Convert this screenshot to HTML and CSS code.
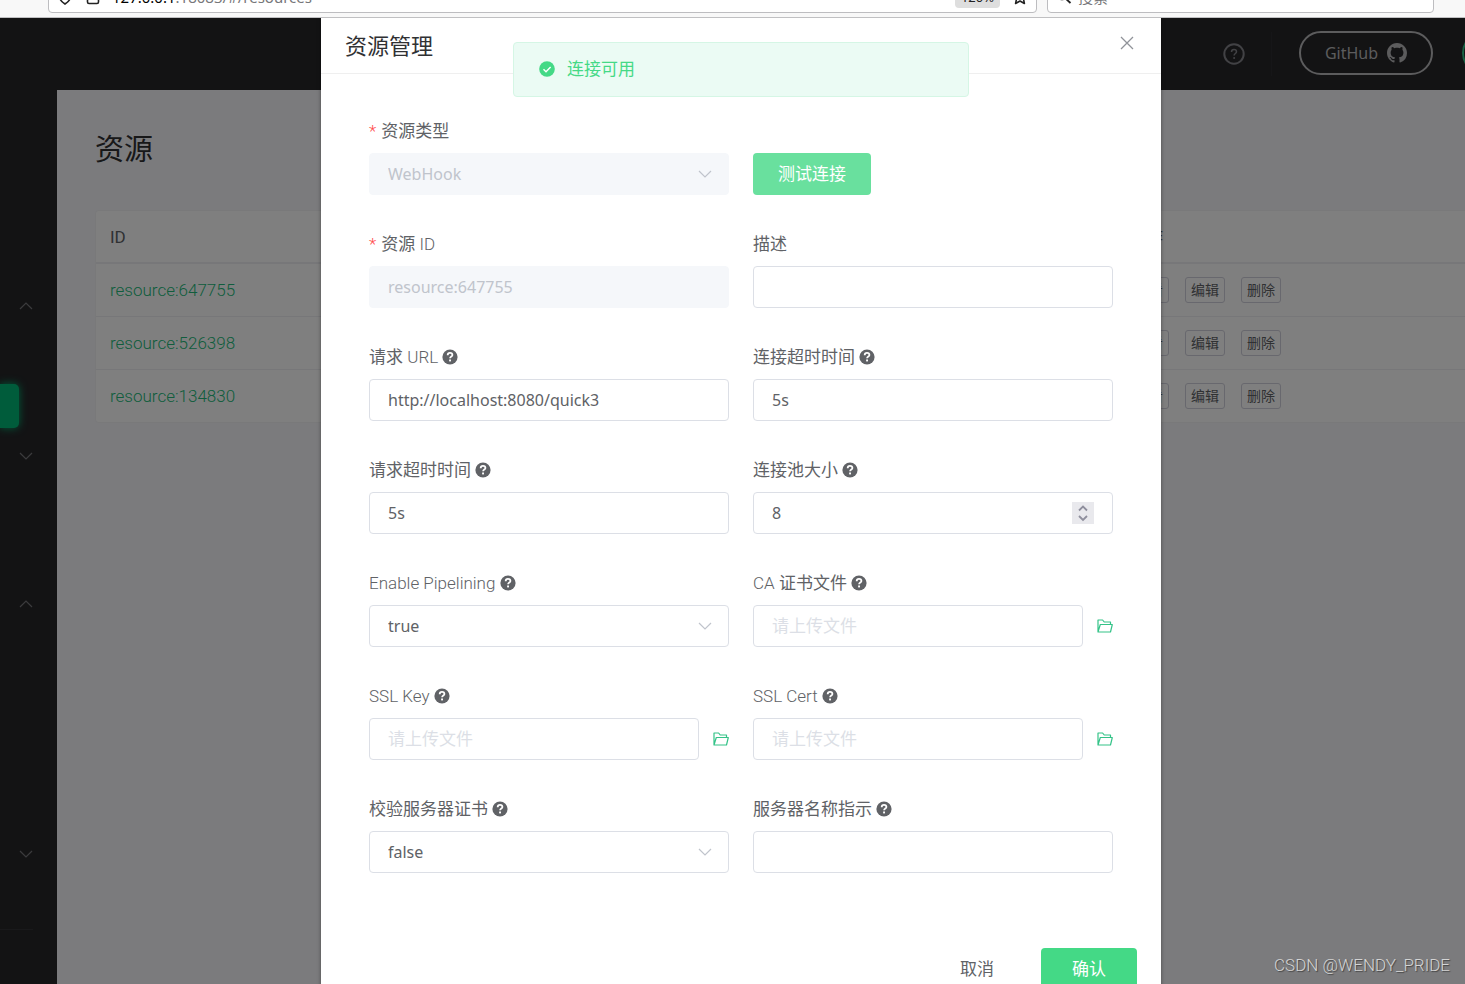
FILE: index.html
```html
<!DOCTYPE html>
<html lang="zh-CN">
<head>
<meta charset="utf-8">
<title>资源管理</title>
<link rel="stylesheet" href="styles.css">
</head>
<body>
<svg class="defs" aria-hidden="true">
  <symbol id="down" viewBox="0 0 16 10"><path d="M2 2l6 6 6-6" fill="none" stroke="currentColor" stroke-width="1.2"/></symbol>
  <symbol id="up" viewBox="0 0 16 10"><path d="M2 8l6-6 6 6" fill="none" stroke="currentColor" stroke-width="1.2"/></symbol>
  <symbol id="help" viewBox="0 0 16 16"><circle cx="8" cy="8" r="7.6" fill="currentColor"/><path d="M5.7 6.2C5.7 4.7 6.6 3.9 8 3.9s2.4.8 2.4 2c0 1.700-2.300 1.500-2.300 3.300" fill="none" stroke="#fff" stroke-width="1.800"/><rect x="7.100" y="10.500" width="1.900" height="1.900" fill="#fff"/></symbol>
  <symbol id="folder" viewBox="0 0 16 14"><path d="M1 13V1h4.600l1.600 2h6.300v2.500M1 13l2.300-7.500H15.300L13.500 13z" fill="none" stroke="currentColor" stroke-width="1.200" stroke-linejoin="round"/></symbol>
</svg>

<div class="browser">
  <div class="address">
    <svg class="shield" viewBox="0 0 16 16"><path d="M8 1l6 2c0 6-1 9-6 12C3 12 2 9 2 3z" fill="none" stroke="currentColor" stroke-width="1.600"/></svg>
    <svg class="lock" viewBox="0 0 16 16"><path d="M5 7V4a3 3 0 0 1 6 0v3" fill="none" stroke="currentColor" stroke-width="1.600"/><rect x="2.500" y="7" width="11" height="7.500" rx="1.500" fill="none" stroke="currentColor" stroke-width="1.600"/></svg>
    <span class="url"><b>127.0.0.1</b>:18083/#/resources</span>
    <span class="zoom-level">120%</span>
    <svg class="star" viewBox="0 0 16 16"><path d="M8 1l2 4.500 5 .5-3.600 3.500 1 5L8 12l-4.400 2.500 1-5L1 6l5-.5z" fill="none" stroke="currentColor" stroke-width="1.600" stroke-linejoin="round"/></svg>
  </div>
  <div class="search">
    <svg viewBox="0 0 16 16"><circle cx="6" cy="6" r="4.500" fill="none" stroke="currentColor" stroke-width="1.600"/><path d="M9 9l5.500 5" stroke="currentColor" stroke-width="1.800"/></svg>
    <input type="text" placeholder="搜索" aria-label="搜索">
  </div>
</div>

<div class="app">
  <nav class="sidebar">
    <ul>
      <li><svg><use href="#up"/></svg></li>
      <li></li>
      <li class="active"></li>
      <li><svg><use href="#down"/></svg></li>
      <li class="leaf"></li>
      <li class="leaf"></li>
      <li><svg><use href="#up"/></svg></li>
      <li></li><li></li><li></li><li></li>
      <li><svg><use href="#down"/></svg></li>
    </ul>
    <hr>
  </nav>
  <div class="content">
    <header class="topbar">
      <button class="top-help" aria-label="帮助"><svg viewBox="0 0 22 22"><circle cx="11" cy="11" r="9.700" fill="none" stroke="currentColor" stroke-width="2"/><path d="M8.500 9c0-1.700 1-2.500 2.500-2.500s2.500 1 2.500 2.200c0 1.800-2.400 1.800-2.400 3.800" fill="none" stroke="currentColor" stroke-width="1.500"/><circle cx="11.100" cy="15" r="1" fill="currentColor"/></svg></button>
      <span class="divider"></span>
      <a class="github" href="#github">GitHub <svg viewBox="0 0 16 16"><path fill="currentColor" d="M8 0C3.580 0 0 3.580 0 8c0 3.540 2.290 6.530 5.470 7.590.4.070.55-.17.55-.38 0-.19-.01-.82-.01-1.490-2.010.37-2.530-.49-2.690-.94-.09-.23-.48-.94-.82-1.130-.28-.15-.68-.52-.01-.53.63-.01 1.080.58 1.230.82.72 1.210 1.870.87 2.330.66.07-.52.28-.87.51-1.070-1.780-.2-3.640-.89-3.640-3.950 0-.87.31-1.590.82-2.150-.08-.2-.36-1.020.08-2.120 0 0 .67-.21 2.200.82.64-.18 1.320-.27 2-.27s1.360.09 2 .27c1.530-1.040 2.200-.82 2.200-.82.44 1.100.16 1.920.08 2.120.51.56.82 1.270.82 2.150 0 3.070-1.870 3.750-3.650 3.950.29.25.54.73.54 1.480 0 1.070-.01 1.930-.01 2.200 0 .21.15.46.55.38A8.010 8.010 0 0 0 16 8c0-4.420-3.580-8-8-8z"/></svg></a>
      <a class="trial" href="#trial" aria-label="试用"></a>
    </header>
    <main>
      <h1>资源</h1>
      <table>
        <colgroup><col class="col-id"><col><col class="col-actions"></colgroup>
        <thead><tr><th>ID</th><th></th><th>操作</th></tr></thead>
        <tbody>
          <tr><td><a href="#r1">resource:647755</a></td><td></td><td><div class="actions"><button>查看</button><button>编辑</button><button>删除</button></div></td></tr>
          <tr><td><a href="#r2">resource:526398</a></td><td></td><td><div class="actions"><button>查看</button><button>编辑</button><button>删除</button></div></td></tr>
          <tr><td><a href="#r3">resource:134830</a></td><td></td><td><div class="actions"><button>查看</button><button>编辑</button><button>删除</button></div></td></tr>
        </tbody>
      </table>
    </main>
  </div>

  <div class="overlay">
    <section class="modal" role="dialog" aria-labelledby="modal-title">
      <header class="modal-head">
        <h2 id="modal-title">资源管理</h2>
        <button class="close" aria-label="关闭"><svg viewBox="0 0 14 14"><path d="M1 1l12 12M13 1L1 13" stroke="currentColor" stroke-width="1.300"/></svg></button>
      </header>
      <form class="form">
        <div class="field">
          <label for="type"><i>*</i>资源类型</label>
          <div class="control"><select id="type" disabled><option>WebHook</option></select><svg class="caret"><use href="#down"/></svg></div>
        </div>
        <div class="field test"><button type="button" class="primary soft">测试连接</button></div>
        <div class="field">
          <label for="rid"><i>*</i>资源 <span>ID</span></label>
          <div class="control"><input id="rid" type="text" value="resource:647755" disabled></div>
        </div>
        <div class="field">
          <label for="desc">描述</label>
          <div class="control"><input id="desc" type="text"></div>
        </div>
        <div class="field">
          <label for="url">请求 <span>URL </span><svg><use href="#help"/></svg></label>
          <div class="control"><input id="url" type="text" value="http://localhost:8080/quick3"></div>
        </div>
        <div class="field">
          <label for="ctimeout">连接超时时间 <svg><use href="#help"/></svg></label>
          <div class="control"><input id="ctimeout" type="text" value="5s"></div>
        </div>
        <div class="field">
          <label for="rtimeout">请求超时时间 <svg><use href="#help"/></svg></label>
          <div class="control"><input id="rtimeout" type="text" value="5s"></div>
        </div>
        <div class="field">
          <label for="pool">连接池大小 <svg><use href="#help"/></svg></label>
          <div class="control"><input id="pool" type="number" value="8"><svg class="spinner" viewBox="0 0 22 22"><path d="M7 8.500l4-4 4 4M7 14l4 4 4-4" fill="none" stroke="currentColor" stroke-width="1.800"/></svg></div>
        </div>
        <div class="field">
          <label for="pipe"><span>Enable Pipelining </span><svg><use href="#help"/></svg></label>
          <div class="control"><select id="pipe"><option>true</option></select><svg class="caret"><use href="#down"/></svg></div>
        </div>
        <div class="field">
          <label for="ca"><span>CA</span> 证书文件 <svg><use href="#help"/></svg></label>
          <div class="control"><input id="ca" type="text" placeholder="请上传文件"><button type="button" class="upload" aria-label="上传"><svg><use href="#folder"/></svg></button></div>
        </div>
        <div class="field">
          <label for="key"><span>SSL Key </span><svg><use href="#help"/></svg></label>
          <div class="control"><input id="key" type="text" placeholder="请上传文件"><button type="button" class="upload" aria-label="上传"><svg><use href="#folder"/></svg></button></div>
        </div>
        <div class="field">
          <label for="cert"><span>SSL Cert </span><svg><use href="#help"/></svg></label>
          <div class="control"><input id="cert" type="text" placeholder="请上传文件"><button type="button" class="upload" aria-label="上传"><svg><use href="#folder"/></svg></button></div>
        </div>
        <div class="field">
          <label for="verify">校验服务器证书 <svg><use href="#help"/></svg></label>
          <div class="control"><select id="verify"><option>false</option></select><svg class="caret"><use href="#down"/></svg></div>
        </div>
        <div class="field">
          <label for="sni">服务器名称指示 <svg><use href="#help"/></svg></label>
          <div class="control"><input id="sni" type="text"></div>
        </div>
      </form>
      <footer class="modal-foot">
        <button class="plain">取消</button>
        <button class="primary">确认</button>
      </footer>
      <div class="message" role="status">
        <svg viewBox="0 0 16 16"><circle cx="8" cy="8" r="7.800" fill="currentColor"/><path d="M4.500 8.200l2.500 2.500 4.600-4.700" fill="none" stroke="#fff" stroke-width="1.400"/></svg>
        连接可用
      </div>
    </section>
  </div>
  <span class="watermark">CSDN @WENDY_PRIDE</span>
</div>
</body>
</html>
```

FILE: styles.css
```css
* { box-sizing: border-box; }

body {
  margin: 0;
  height: 100vh;
  display: flex;
  flex-direction: column;
  overflow: hidden;
  font: 300 17px/24px Roboto, "Noto Sans CJK SC", sans-serif;
  color: #606266;
}

button, input, select { font: inherit; color: inherit; }
button { padding: 0; border: 0; background: none; }
a { text-decoration: none; }
h1, h2 { margin: 0; font-weight: 400; }
.defs { position: absolute; width: 0; height: 0; }

/* Browser toolbar */
.browser {
  flex: none;
  height: 18px;
  padding: 0 31px 4px 48px;
  display: grid;
  grid-template-columns: 989fr 387fr;
  align-items: end;
  align-content: end;
  gap: 10px;
  overflow: hidden;
  background: #f8f8f8;
  border-bottom: 1px solid #c0c0c2;
}
.address, .search {
  height: 32px;
  min-width: 0;
  padding: 0 8px;
  display: flex;
  align-items: center;
  background: #fff;
  border: 1px solid #bdbdc0;
  border-radius: 4px;
  color: #222;
  font: 400 15px/20px "Noto Sans", "Noto Sans CJK SC", sans-serif;
}
.search { gap: 6px; }
.browser svg { width: 16px; height: 16px; flex: none; }
.lock { margin-left: 12px; }
.url { flex: 1; margin-left: 11px; color: #77777a; }
.url b { font-weight: 400; color: #000; }
.zoom-level {
  padding: 0 6px;
  margin-right: 12px;
  background: #dedede;
  border-radius: 4px;
  font-size: 13px;
  line-height: 22px;
}
.search input { min-width: 0; flex: 1; padding: 0; border: 0; background: none; }
.search input::placeholder { color: #77777a; opacity: 1; }

/* Application behind the dialog */
.app {
  position: relative;
  flex: 1;
  min-height: 0;
  display: flex;
  overflow: hidden;
  background: #f7f7fb;
}
.sidebar { width: 57px; flex: none; padding-top: 263px; background: #262629; }
.sidebar ul { margin: 0; padding: 0; list-style: none; }
.sidebar li { height: 50px; padding-left: 18px; display: flex; align-items: center; color: #77777b; }
.sidebar li.leaf { height: 49px; }
.sidebar li.active { padding: 3px 0; }
.sidebar li.active::before {
  content: "";
  width: 19px;
  height: 100%;
  background: #00b876;
  border-radius: 0 5px 5px 0;
  box-shadow: 0 0 8px #00b876;
}
.sidebar svg { width: 16px; height: 10px; }
.sidebar hr { width: 33px; margin: 50px 0 0; border: 0; border-top: 1px solid #323236; }
.content { flex: 1; min-width: 0; }
.topbar {
  height: 72px;
  display: flex;
  align-items: center;
  justify-content: flex-end;
  overflow: hidden;
  background: #262629;
}
.top-help { height: 22px; color: #85858a; }
.top-help svg { width: 22px; height: 22px; }
.divider { width: 1px; height: 44px; margin: 0 27px 0 26px; background: #2c2c30; }
.github {
  width: 134px;
  height: 44px;
  margin-bottom: 2px;
  display: flex;
  align-items: center;
  justify-content: center;
  gap: 9px;
  border: 2px solid #b8b8ba;
  border-radius: 22px;
  color: #b8b8ba;
  font-size: 16px;
  font-weight: 400;
  font-family: "Noto Sans", sans-serif;
}
.github svg { width: 20px; height: 20px; }
.trial { width: 134px; height: 44px; margin: 0 -131px 2px 29px; border: 2px solid #34c388; border-radius: 22px; }

main { padding: 40px 0 0 38px; }
h1 { margin-bottom: 40px; font-size: 29px; line-height: 40px; color: #303133; }
table {
  width: 100%;
  table-layout: fixed;
  border-collapse: separate;
  border-spacing: 0;
  background: #fff;
  border: 1px solid #f2f2f5;
  border-right: 0;
  border-radius: 4px 0 0 4px;
}
.col-id { width: 340px; }
.col-actions { width: 350px; }
th, td { height: 53px; padding: 0 14px; text-align: left; border-bottom: 1px solid #eeeef2; }
th { font-weight: 400; border-bottom-width: 2px; }
tbody tr:last-child td { height: 52px; border-bottom: 0; }
td a { color: #22bb7a; }
.actions { display: flex; gap: 16px; }
.actions button {
  width: 40px;
  height: 26px;
  border: 1px solid #d0d0dc;
  border-radius: 3px;
  font-size: 14px;
  font-weight: 400;
}

/* Dialog */
.overlay {
  position: absolute;
  inset: 0;
  padding-left: 17px;
  display: flex;
  justify-content: center;
  align-items: flex-start;
  background: rgba(0, 0, 0, 0.5);
}
.modal {
  position: relative;
  width: 840px;
  max-width: 100%;
  background: #fff;
  box-shadow: 0 1px 4px rgba(0, 0, 0, 0.4);
}
.modal-head {
  height: 56px;
  padding: 2px 27px 0 24px;
  display: flex;
  align-items: center;
  justify-content: space-between;
  border-bottom: 1px solid #efefef;
}
h2 { font-size: 22px; line-height: 30px; color: #303133; }
.close { color: #909399; margin-bottom: 8px; line-height: 14px; }
.close svg { width: 14px; height: 14px; display: block; }
.form {
  padding: 45px 48px 75px;
  display: grid;
  grid-template-columns: 1fr 1fr;
  gap: 37px 24px;
}
.field { display: flex; flex-direction: column; gap: 10px; min-width: 0; }
.field label { height: 24px; display: flex; align-items: center; white-space: pre; font-weight: 400; }
.field label span { font-weight: 300; }
.field label i { margin-right: 5px; font-style: normal; font-weight: 300; color: #ff4d4d; }
.field label svg { width: 16px; height: 16px; }
.control { position: relative; display: flex; align-items: center; gap: 14px; }
.control input, .control select {
  flex: 1;
  min-width: 0;
  height: 42px;
  padding: 0 18px;
  appearance: none;
  background: #fff;
  border: 1px solid #dcdfe6;
  border-radius: 4px;
  font: 400 16px/24px "Noto Sans", "Noto Sans CJK SC", sans-serif;
}
.control input[type="number"] { appearance: textfield; }
.control input:disabled, .control select:disabled {
  background: #f5f7fa;
  border-color: #f5f7fa;
  color: #c0c4cc;
  opacity: 1;
}
.control input::placeholder { color: #dcdfe6; opacity: 1; font-size: 17px; }
.caret { position: absolute; right: 16px; width: 16px; height: 10px; color: #c0c4cc; pointer-events: none; }
.spinner { position: absolute; right: 19px; width: 22px; height: 22px; background: #e9e9ed; color: #8f8f9d; }
.upload { color: #34c388; line-height: 14px; }
.upload svg { width: 16px; height: 14px; display: block; }
.test { justify-content: flex-end; align-items: flex-start; }
.primary {
  min-width: 96px;
  height: 42px;
  padding: 0 25px;
  background: #44d986;
  border-radius: 4px;
  color: #fff;
  font-weight: 400;
}
.soft { background: #69e09e; }
.modal-foot { padding: 0 24px 24px; display: flex; justify-content: flex-end; gap: 47px; }
.plain { font-weight: 400; }
.message {
  position: absolute;
  top: 24px;
  left: 50%;
  transform: translateX(-50%);
  width: 456px;
  height: 55px;
  padding: 0 25px 2px;
  display: flex;
  align-items: center;
  gap: 12px;
  background: #ebfbf4;
  border: 1px solid #d5f6e5;
  border-radius: 4px;
  color: #44d986;
  font-weight: 400;
}
.message svg { width: 16px; height: 16px; }

.watermark {
  position: absolute;
  right: 15px;
  bottom: 7px;
  font-size: 17px;
  color: #d4d4d4;
  text-shadow: 1px 1px 1px #444;
}
```
